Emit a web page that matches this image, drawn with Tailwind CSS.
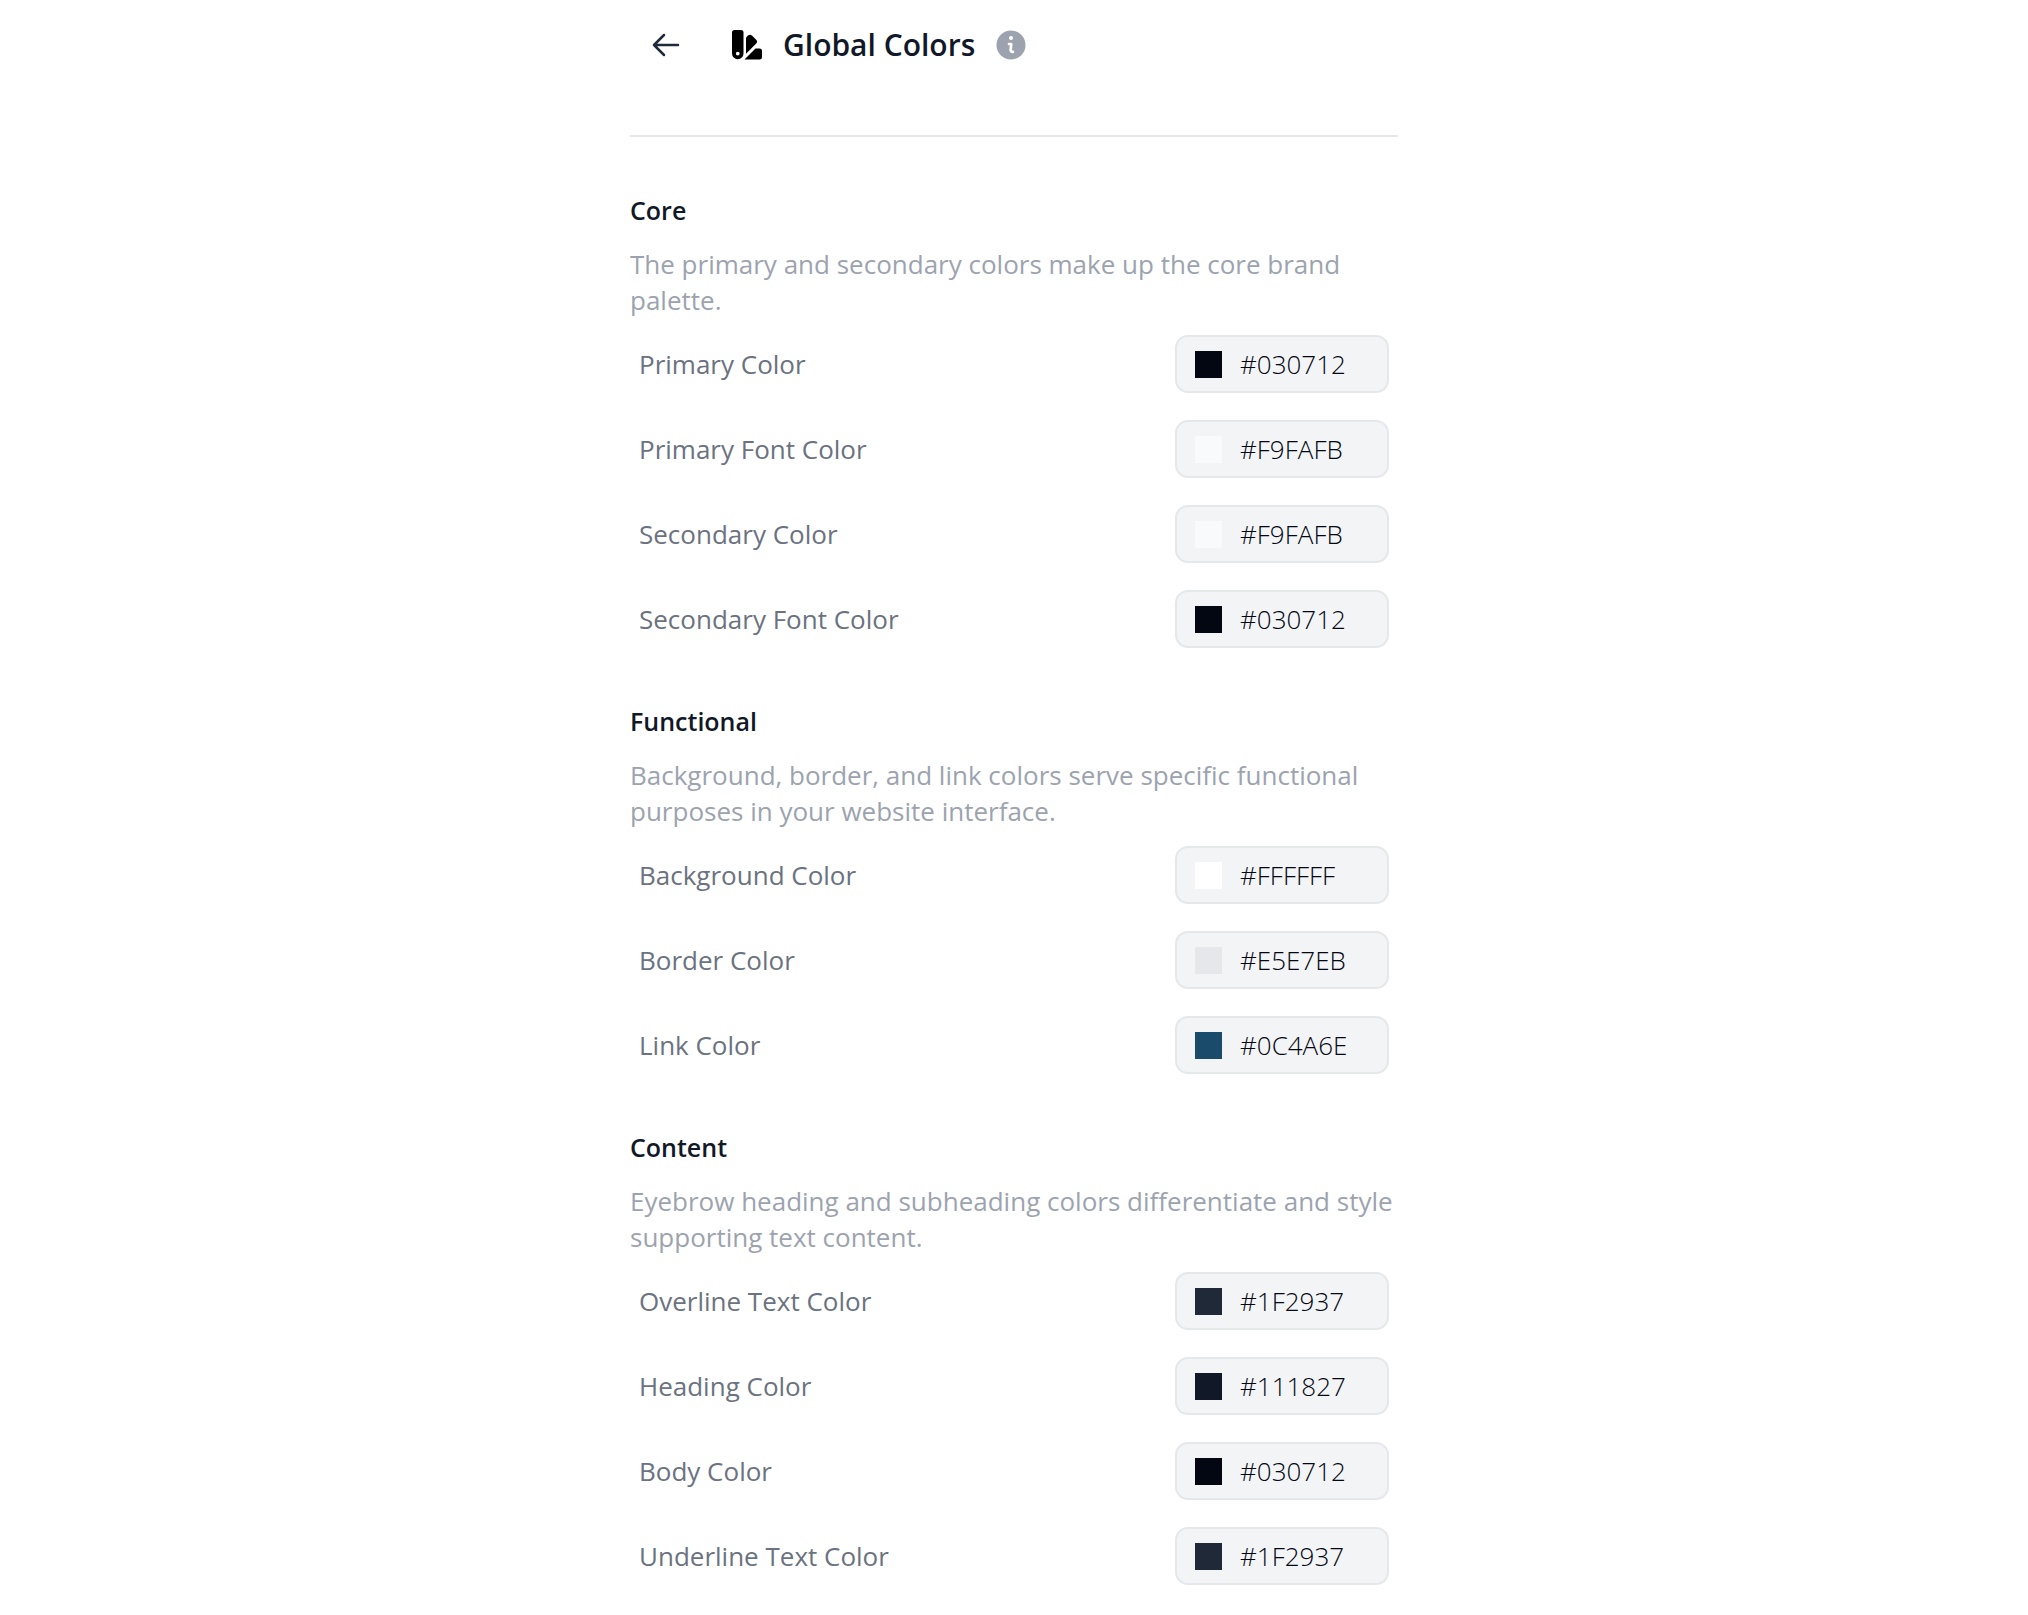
<!DOCTYPE html>
<html lang="en">
<head>
  <meta charset="UTF-8" />
  <meta name="viewport" content="width=device-width, initial-scale=1.0" />
  <script src="https://cdn.jsdelivr.net/npm/@tailwindcss/browser@4"></script>
  <title>Global Colors</title>
</head>

<body class="bg-white font-['Segoe_UI','Open_Sans',sans-serif] text-[26px] leading-9 text-[#111827]">

  <main class="mx-auto max-w-3xl pt-[15px] pb-7">
    <header class="flex items-center border-b-2 border-gray-200 pb-[60px]">
      <button type="button" aria-label="Back" class="flex size-[60px] items-center justify-center pl-3 text-gray-800">
        <svg class="h-6 w-7" viewBox="0 0 28 24" fill="none" stroke="currentColor" stroke-width="2.5" stroke-linecap="round" stroke-linejoin="round">
          <path d="M12 2 2 12l10 10M2 12h24" />
        </svg>
      </button>
      <svg class="ml-[42px] size-[30px]" viewBox="0 0 30 30" fill="#000">
        <path fill-rule="evenodd" d="M2.500 0h6.500A2.500 2.500 0 0 1 11.500 2.500V23.500A5.750 5.750 0 0 1 0 23.500V2.500A2.500 2.500 0 0 1 2.500 0ZM5.750 21.700a1.900 1.900 0 1 0 0 3.800a1.900 1.900 0 0 0 0-3.800Z" />
        <path d="M14 7.500l1.700-1.700a3.200 3.200 0 0 1 4.500 0l4 4a2.700 2.700 0 0 1 0 3.800L14 23.800Z" />
        <path d="M12.500 29.500 23.500 18.500H27.500a2.500 2.500 0 0 1 2.500 2.500V27a2.500 2.500 0 0 1-2.500 2.500Z" />
      </svg>
      <h1 class="ml-[21px] text-[30px] font-semibold">Global Colors</h1>
      <button type="button" aria-label="About global colors" class="ml-[21px] text-[#9ca3af]">
        <svg class="size-[30px]" viewBox="0 0 30 30">
          <circle cx="15" cy="15" r="14.500" fill="currentColor" />
          <circle cx="15" cy="8" r="2" fill="#fff" />
          <path d="M13 14h2.200l-.5 5.500q-.3 2.500 2.300 2.300" fill="none" stroke="#fff" stroke-width="2.700" stroke-linecap="round" stroke-linejoin="round" />
        </svg>
      </button>
    </header>

    <form id="palette" class="mt-[55px] flex flex-col gap-[55px]">
      <!-- Sections inserted here -->
    </form>
  </main>

  <script>
    const sections = [
      {
        title: 'Core',
        text: 'The primary and secondary colors make up the core brand palette.',
        colors: [
          ['Primary Color', '#030712'],
          ['Primary Font Color', '#F9FAFB'],
          ['Secondary Color', '#F9FAFB'],
          ['Secondary Font Color', '#030712']
        ]
      },
      {
        title: 'Functional',
        text: 'Background, border, and link colors serve specific functional purposes in your website interface.',
        colors: [
          ['Background Color', '#FFFFFF'],
          ['Border Color', '#E5E7EB'],
          ['Link Color', '#0C4A6E', '#1B4B6B']
        ]
      },
      {
        title: 'Content',
        text: 'Eyebrow heading and subheading colors differentiate and style supporting text content.',
        colors: [
          ['Overline Text Color', '#1F2937'],
          ['Heading Color', '#111827'],
          ['Body Color', '#030712'],
          ['Underline Text Color', '#1F2937']
        ]
      }
    ];

    const palette = document.getElementById('palette');

    function colorRow([label, value, swatch = value]) {
      const id = label.toLowerCase().replaceAll(' ', '-');
      return `
        <div class="flex items-center justify-between px-[9px]">
          <label for="${id}" class="text-[#6b7280]">${label}</label>
          <div class="flex h-[58px] w-[214px] items-center gap-[18px] rounded-[13px] border-2 border-gray-200 bg-gray-100 px-[18px]">
            <input type="color" value="${swatch.toLowerCase()}" aria-label="${label} swatch"
              class="size-[27px] shrink-0 appearance-none [&::-webkit-color-swatch-wrapper]:p-0 [&::-webkit-color-swatch]:rounded-none [&::-webkit-color-swatch]:border-0" />
            <input type="text" id="${id}" value="${value}" maxlength="7"
              class="w-full min-w-0 font-[350] text-gray-950 outline-none" />
          </div>
        </div>`;
    }

    palette.innerHTML = sections.map(section => `
      <section>
        <h2 class="text-[25px] font-semibold">${section.title}</h2>
        <p class="mt-[18px] text-[#9ca3af]">${section.text}</p>
        <div class="mt-[17px] flex flex-col gap-[27px]">${section.colors.map(colorRow).join('')}</div>
      </section>`).join('');

    palette.addEventListener('input', (e) => {
      const [picker, text] = e.target.parentElement.querySelectorAll('input');
      if (e.target === picker) text.value = picker.value.toUpperCase();
      else if (/^#[0-9a-f]{6}$/i.test(text.value)) picker.value = text.value;
    });
  </script>
</body>
</html>
